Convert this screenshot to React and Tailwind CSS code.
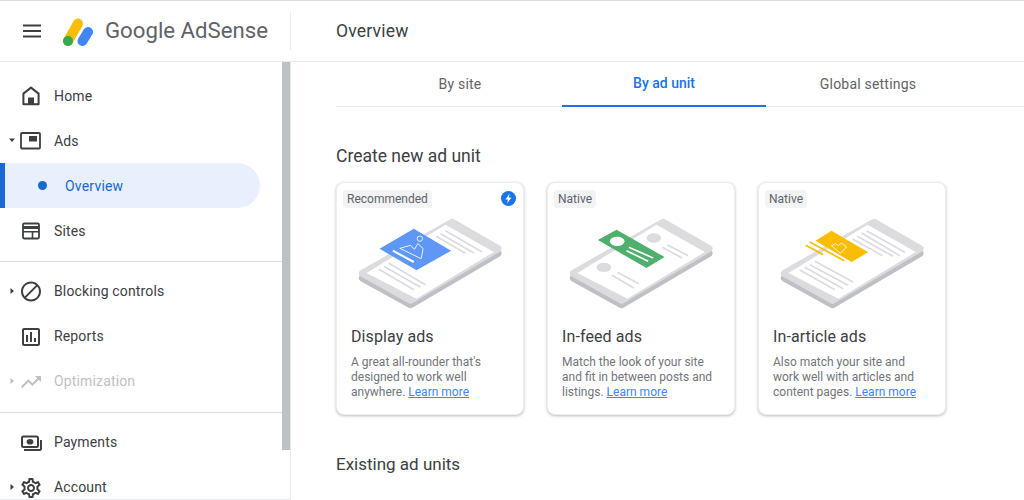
import React from "react";
import { MdOutlineAssessment, MdBlock, MdTrendingUp, MdOutlineSettings } from "react-icons/md";

const Caret = ({ down, faint }) => (
  <svg width="8" height="8" viewBox="0 0 8 8" className={faint ? "text-[#bdc1c6]" : "text-[#3c4043]"}>
    {down ? <path d="M1 2.5h6L4 6z" fill="currentColor" /> : <path d="M2.5 1v6L6 4z" fill="currentColor" />}
  </svg>
);

const HomeIcon = () => (
  <svg width="24" height="24" viewBox="0 0 24 24" fill="none">
    <path d="M12 3.6 4.4 9.6v10.6h15.2V9.6z" stroke="#3c4043" strokeWidth="2" strokeLinejoin="round" />
    <rect x="9" y="13.5" width="6" height="7" fill="#3c4043" />
  </svg>
);
const AdsIcon = () => (
  <svg width="24" height="24" viewBox="0 0 24 24" fill="none">
    <rect x="2" y="4" width="19" height="15.5" rx="1" stroke="#3c4043" strokeWidth="1.8" />
    <rect x="10" y="7" width="8" height="5.5" fill="#3c4043" />
  </svg>
);
const SitesIcon = () => (
  <svg width="24" height="24" viewBox="0 0 24 24" fill="none">
    <rect x="4" y="4.5" width="16" height="15" rx="1.2" stroke="#3c4043" strokeWidth="1.8" />
    <path d="M4 8.5h16" stroke="#3c4043" strokeWidth="3" />
    <path d="M4 12.8h16M13.5 12.8V19" stroke="#3c4043" strokeWidth="1.6" />
  </svg>
);
const PayIcon = () => (
  <svg width="24" height="24" viewBox="0 0 24 24" fill="none">
    <rect x="3" y="5.5" width="16" height="10.5" rx="1.5" stroke="#3c4043" strokeWidth="2" />
    <ellipse cx="11" cy="10.7" rx="3.4" ry="2.8" fill="#3c4043" />
    <path d="M22 9v8.5a1.5 1.5 0 0 1-1.5 1.5H5" stroke="#3c4043" strokeWidth="2" />
  </svg>
);

const NavItem = ({ icon, label, caret, faint, low }) => (
  <div className="relative flex items-center h-[45px] pl-[19px]">
    {caret && (
      <span className="absolute left-[8px] top-[18px] flex">
        <Caret down={caret === "down"} faint={faint} />
      </span>
    )}
    <span className={`flex w-6 h-6 items-center justify-center ${faint ? "text-[#bdc1c6]" : "text-[#3c4043]"}`}>{icon}</span>
    <span className={`ml-[11px] ${low ? "pt-px" : ""} text-[14px] tracking-[0.15px] ${faint ? "text-[#bdc1c6]" : "text-[#3c4043]"}`}>{label}</span>
  </div>
);

const Body = ({ children }) => (
  <>
    <polygon points="96,310 365,157 502,236 240,390" fill="#bdc1c6" stroke="#bdc1c6" strokeWidth="22" strokeLinejoin="round" />
    <polygon points="96,296 365,143 502,222 240,376" fill="#dadce0" stroke="#dadce0" strokeWidth="22" strokeLinejoin="round" />
    <polygon points="108,295 345,150 490,232 258,372" fill="#ffffff" />
    {children}
  </>
);

const Lines = ({ items, color = "#dadce0", w = 5 }) => (
  <g stroke={color} strokeWidth={w}>
    {items.map((l, i) => (
      <line key={i} x1={l[0]} y1={l[1]} x2={l[2]} y2={l[3]} />
    ))}
  </g>
);

const Phone = ({ children }) => (
  <svg width="147" height="92" viewBox="80 130 440 276" className="block ml-[20px] mt-[10px]">
    <Body>{children}</Body>
  </svg>
);

const DisplayArt = () => (
  <Phone>
    <Lines items={[[345,168,455,232],[330,177,430,235],[317,185,405,236],[175,266,285,330],[160,275,270,338],[145,284,250,345]]} />
    <polygon points="250,162 362,228 258,287 147,222" fill="#5e97f6" />
    <circle cx="268" cy="192" r="8" fill="none" stroke="#fff" strokeWidth="2.5" />
    <path d="M208 221 272 252 278 222 262 207 252 224 240 212Z" fill="none" stroke="#fff" strokeWidth="2.5" />
    <line x1="187" y1="228" x2="250" y2="262" stroke="#fff" strokeWidth="6" />
  </Phone>
);
const FeedArt = () => (
  <Phone>
    <ellipse cx="337" cy="190" rx="22" ry="14" fill="#dadce0" />
    <ellipse cx="187" cy="278" rx="22" ry="14" fill="#dadce0" />
    <Lines items={[[377,210,440,243],[362,218,422,250],[227,293,292,327],[212,302,277,340]]} />
    <polygon points="225,165 369,247 315,280 169,196" fill="#4fb06d" />
    <ellipse cx="227" cy="200" rx="22" ry="14" fill="#fff" />
    <Lines color="#fff" items={[[262,218,335,250],[255,228,320,260]]} />
  </Phone>
);
const ArticleArt = () => (
  <Phone>
    <Lines items={[[342,168,457,233],[327,175,442,243],[314,185,422,245],[300,193,390,243],[187,260,302,322],[172,270,287,332],[157,278,272,342],[142,286,247,345]]} />
    <polygon points="237,168 347,233 297,262 189,198" fill="#fbbc04" />
    <Lines color="#fbbc04" items={[[172,202,275,258],[160,212,212,240]]} w="5" />
    <path d="M237 213 264 236 282 217 266 205 258 213 250 207Z" fill="none" stroke="#fff" strokeWidth="2.5" />
  </Phone>
);

const Chip = ({ children }) => (
  <span className="inline-flex h-[18px] items-center rounded-[4px] bg-[#f1f3f4] px-[4px] text-[12px] text-[#5f6368]">{children}</span>
);

const Card = ({ chip, bolt, art, title, text }) => (
  <div className="relative h-[233px] w-[188px] rounded-[8px] border border-[#eceef0] bg-white shadow-[0_1px_3px_rgba(60,64,67,0.35)]">
    <div className="flex items-center justify-between pl-[6px] pr-[7px] pt-[7px]">
      <Chip>{chip}</Chip>
      {bolt && (
        <svg width="15" height="15" viewBox="0 0 15 15" className="-mt-px">
          <circle cx="7.5" cy="7.5" r="7.5" fill="#1a73e8" />
          <path d="M8.6 2.6 4.4 8.4h2.5l-.8 4 4.3-6H7.9z" fill="#fff" />
        </svg>
      )}
    </div>
    {art}
    <div className="px-[14px]">
      <h3 className="mt-[17px] text-[16px] leading-[20px] tracking-[0.1px] text-[#3c4043]">{title}</h3>
      <p className="mt-[8px] text-[12px] leading-[15px] text-[#70757a]">
        {text} <a className="text-[#4285f4] underline">Learn more</a>
      </p>
    </div>
  </div>
);

const Tab = ({ active, children }) => (
  <div className={`flex h-[45px] w-[204px] items-center justify-center text-[14px] ${active ? "border-b-2 border-b-[#1a73e8] font-medium text-[#1a73e8]" : "tracking-[0.2px] text-[#5f6368]"}`}>{children}</div>
);

export default function App() {
  return (
    <div className="flex h-[500px] w-[1024px] flex-col overflow-hidden bg-white font-['Roboto',sans-serif]">
      <header className="flex h-[62px] shrink-0 items-center border-t border-t-[#dadce0] border-b border-b-[#e8eaed]">
        <div className="flex w-[290px] items-center">
          <svg width="24" height="24" viewBox="0 0 24 24" className="ml-[20px]">
            <path d="M3 6.5h18M3 12h18M3 17.5h18" stroke="#3c4043" strokeWidth="2" />
          </svg>
          <svg width="36" height="36" viewBox="0 0 36 36" className="ml-[17px]">
            <line x1="7" y1="28" x2="17" y2="10.5" stroke="#fbbc04" strokeWidth="10" strokeLinecap="round" />
            <line x1="21.5" y1="28" x2="27" y2="19" stroke="#4285f4" strokeWidth="10" strokeLinecap="round" />
            <circle cx="7" cy="28" r="5" fill="#34a853" />
          </svg>
          <span className="ml-[8px] text-[22.2px] text-[#5f6368]">Google AdSense</span>
        </div>
        <div className="h-[38px] w-px bg-[#e8eaed]" />
        <div className="ml-[45px] text-[17.5px] tracking-[0.2px] text-[#3c4043]">Overview</div>
      </header>

      <div className="flex min-h-0 flex-1">
        <aside className="flex h-full w-[291px] shrink-0 border-r border-r-[#e8eaed] border-b border-b-[#e8eaed]">
          <nav className="w-[282px] shrink-0 pt-[11px]">
            <NavItem low icon={<HomeIcon />} label="Home" />
            <NavItem low icon={<AdsIcon />} label="Ads" caret="down" />
            <div className="flex h-[45px] items-center border-l-[5px] border-l-[#1967d2]">
              <div className="flex h-[45px] w-[255px] items-center rounded-r-[23px] bg-[#e8f0fe]">
                <span className="ml-[33px] h-[9px] w-[9px] rounded-full bg-[#1967d2]" />
                <span className="ml-[18px] pt-px text-[14px] tracking-[0.2px] text-[#1967d2]">Overview</span>
              </div>
            </div>
            <NavItem low icon={<SitesIcon />} label="Sites" />
            <div className="mt-[8px] mb-[7px] h-px bg-[#dadce0]" />
            <NavItem icon={<MdBlock size={27} />} label="Blocking controls" caret="right" />
            <NavItem icon={<MdOutlineAssessment size={24} />} label="Reports" />
            <NavItem icon={<MdTrendingUp size={24} />} label="Optimization" caret="right" faint />
            <div className="mt-[8px] mb-[7px] h-px bg-[#dadce0]" />
            <NavItem icon={<PayIcon />} label="Payments" />
            <NavItem icon={<MdOutlineSettings size={24} />} label="Account" caret="right" />
          </nav>
          <div className="h-[388px] w-2 bg-[#bdc1c6]" />
        </aside>

        <main className="min-w-0 flex-1 pl-[45px]">
          <div className="flex h-[45px] border-b border-b-[#e8eaed] pl-[22px]">
            <Tab>By site</Tab>
            <Tab active>By ad unit</Tab>
            <Tab>Global settings</Tab>
          </div>
          <h2 className="mt-[37px] text-[17.5px] leading-[24px] text-[#3c4043]">Create new ad unit</h2>
          <div className="mt-[14px] flex gap-[23px]">
            <Card chip="Recommended" bolt art={<DisplayArt />} title="Display ads" text="A great all-rounder that's designed to work well anywhere." />
            <Card chip="Native" art={<FeedArt />} title="In-feed ads" text="Match the look of your site and fit in between posts and listings." />
            <Card chip="Native" art={<ArticleArt />} title="In-article ads" text="Also match your site and work well with articles and content pages." />
          </div>
          <h2 className="mt-[37px] text-[17px] leading-[24px] text-[#3c4043]">Existing ad units</h2>
        </main>
      </div>
    </div>
  );
}
